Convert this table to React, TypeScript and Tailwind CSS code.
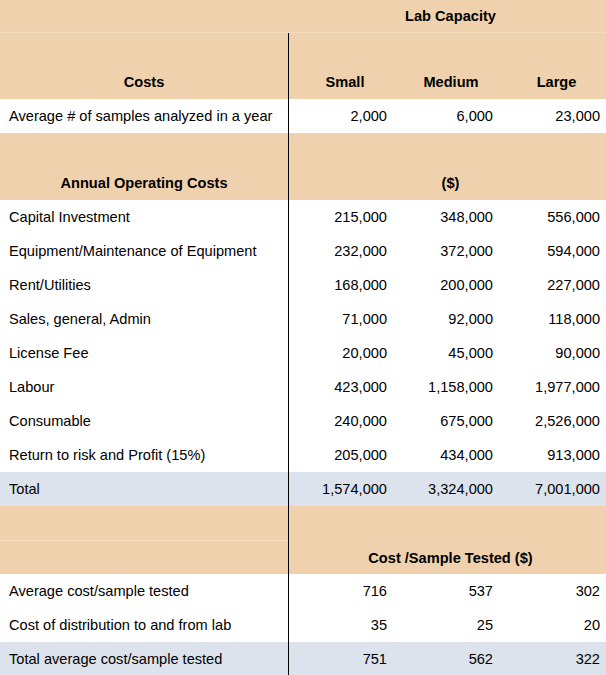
import React from 'react';

type Row = { label: string; values: string[]; tone?: 'white' | 'total' };

const operating: Row[] = [
  { label: 'Capital Investment', values: ['215,000', '348,000', '556,000'] },
  { label: 'Equipment/Maintenance of Equipment', values: ['232,000', '372,000', '594,000'] },
  { label: 'Rent/Utilities', values: ['168,000', '200,000', '227,000'] },
  { label: 'Sales, general, Admin', values: ['71,000', '92,000', '118,000'] },
  { label: 'License Fee', values: ['20,000', '45,000', '90,000'] },
  { label: 'Labour', values: ['423,000', '1,158,000', '1,977,000'] },
  { label: 'Consumable', values: ['240,000', '675,000', '2,526,000'] },
  { label: 'Return to risk and Profit (15%)', values: ['205,000', '434,000', '913,000'] },
  { label: 'Total', values: ['1,574,000', '3,324,000', '7,001,000'], tone: 'total' },
];

const perSample: Row[] = [
  { label: 'Average cost/sample tested', values: ['716', '537', '302'] },
  { label: 'Cost of distribution to and from lab', values: ['35', '25', '20'] },
  { label: 'Total average cost/sample tested', values: ['751', '562', '322'], tone: 'total' },
];

function DataRow({ row }: { row: Row }) {
  const bg = row.tone === 'total' ? 'bg-[#dce3ec]' : 'bg-white';
  return (
    <div className={`flex h-[34px] items-center ${bg}`}>
      <div className="flex h-full w-[289px] shrink-0 items-center border-r border-black pl-[9px] pt-[2px]">
        {row.label}
      </div>
      <div className="w-[106px] pr-2 pt-[2px] text-right">{row.values[0]}</div>
      <div className="w-[106px] pr-2 pt-[2px] text-right">{row.values[1]}</div>
      <div className="flex-1 pr-[6px] pt-[2px] text-right">{row.values[2]}</div>
    </div>
  );
}

function SectionHeader({ label, right, height }: { label: string; right: React.ReactNode; height: string }) {
  return (
    <div className={`flex items-end bg-[#efd1ad] font-bold ${height}`}>
      <div className="flex h-full w-[289px] shrink-0 items-end justify-center border-r border-black">
        <div className="flex h-[34px] items-center pt-[2px]">{label}</div>
      </div>
      {right}
    </div>
  );
}

export default function App() {
  return (
    <div className="w-[606px] h-[675px] overflow-hidden bg-white text-[14.6px] text-black font-['Liberation_Sans',Arial,sans-serif]">
      {/* Lab capacity banner */}
      <div className="flex h-[32px] items-center bg-[#efd1ad] pt-[2px] font-bold">
        <div className="w-[289px] shrink-0" />
        <div className="flex-1 pl-[6px] text-center">Lab Capacity</div>
      </div>
      <div className="h-px bg-[#f4dcc0]" />

      <SectionHeader
        label="Costs"
        height="h-[66px]"
        right={
          <div className="flex h-[34px] flex-1 items-center pt-[2px]">
            <div className="w-[106px] pl-[6px] text-center">Small</div>
            <div className="w-[106px] pl-[6px] text-center">Medium</div>
            <div className="flex-1 pl-[6px] text-center">Large</div>
          </div>
        }
      />
      <DataRow row={{ label: 'Average # of samples analyzed in a year', values: ['2,000', '6,000', '23,000'] }} />

      <SectionHeader
        label="Annual Operating Costs"
        height="h-[67px]"
        right={<div className="flex h-[34px] flex-1 items-center justify-center pl-[6px] pt-[2px]">($)</div>}
      />
      {operating.map((r) => (
        <DataRow key={r.label} row={r} />
      ))}

      {/* Cost per sample section */}
      <div className="flex h-[68px] bg-[#efd1ad] font-bold">
        <div className="flex w-[289px] shrink-0 flex-col border-r border-black">
          <div className="h-[34px]" />
          <div className="h-px bg-[#f4dcc0]" />
          <div className="flex-1" />
        </div>
        <div className="flex flex-1 items-end">
          <div className="flex h-[33px] flex-1 items-center justify-center pl-[6px] pt-[2px]">Cost /Sample Tested ($)</div>
        </div>
      </div>
      {perSample.map((r) => (
        <DataRow key={r.label} row={r} />
      ))}
    </div>
  );
}
